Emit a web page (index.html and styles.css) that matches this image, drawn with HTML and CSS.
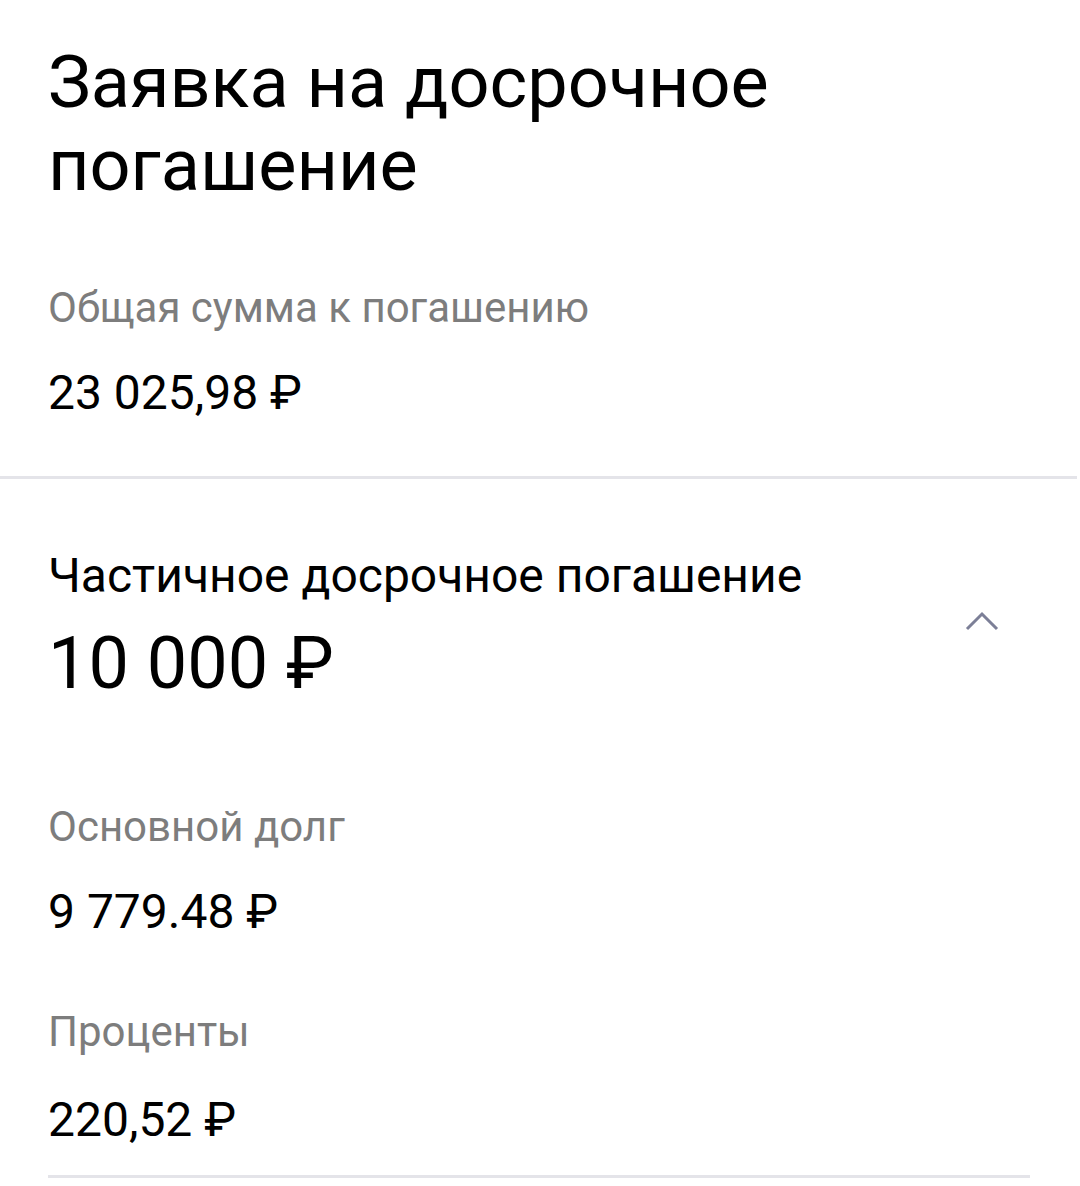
FILE: index.html
```html
<!DOCTYPE html>
<html lang="ru">
<head>
<meta charset="utf-8">
<link rel="stylesheet" href="styles.css">
</head>
<body>
<div class="page">
  <h1 class="title">Заявка на досрочное погашение</h1>
  <section class="block">
    <div class="label label-first">Общая сумма к погашению</div>
    <div class="value">23 025,98 ₽</div>
  </section>
  <div class="divider-full"></div>
  <section class="block">
    <div class="head-row">
      <div class="head-text">
        <div class="subhead">Частичное досрочное погашение</div>
        <div class="big-value">10 000 ₽</div>
      </div>
      <svg class="chevron" width="34" height="22" viewBox="0 0 34 22" aria-hidden="true">
        <path d="M2 19 L17 4 L32 19" fill="none" stroke="#7c7f97" stroke-width="3"/>
      </svg>
    </div>
    <div class="label label-main">Основной долг</div>
    <div class="value">9 779.48 ₽</div>
    <div class="label label-pct">Проценты</div>
    <div class="value value-last">220,52 ₽</div>
    <div class="divider-inset"></div>
  </section>
</div>
</body>
</html>
```

FILE: styles.css
```css
html, body {
  margin: 0;
  padding: 0;
  background: #ffffff;
}
body {
  font-family: Roboto, "Noto Sans", sans-serif;
  color: #000000;
  width: 1080px;
  height: 1186px;
  overflow: hidden;
}
.page {
  padding-top: 41px;
}
.title {
  margin: 0;
  padding: 0 48px;
  font-size: 72px;
  line-height: 83px;
  font-weight: 400;
  width: 760px;
}
.block {
  padding: 0 48px;
}
.label {
  font-size: 42px;
  line-height: 50px;
  color: #7d7d7d;
}
.label-first {
  margin-top: 76px;
}
.label-main {
  margin-top: 96px;
}
.label-pct {
  margin-top: 67px;
}
.value {
  font-size: 48px;
  line-height: 56px;
  margin-top: 32px;
}
.value-last {
  margin-top: 35px;
}
.divider-full {
  height: 3px;
  background: #e4e4e9;
  margin-top: 55px;
  width: 1077px;
}
.head-row {
  display: flex;
  align-items: center;
  justify-content: space-between;
  margin-top: 69px;
}
.subhead {
  font-size: 48px;
  line-height: 56px;
}
.big-value {
  font-size: 72px;
  line-height: 84px;
  margin-top: 18px;
}
.chevron {
  margin-right: 33px;
  margin-bottom: 12px;
  flex: none;
}
.divider-inset {
  height: 3px;
  background: #e4e4e9;
  margin-top: 27px;
  margin-right: 2px;
}
```
